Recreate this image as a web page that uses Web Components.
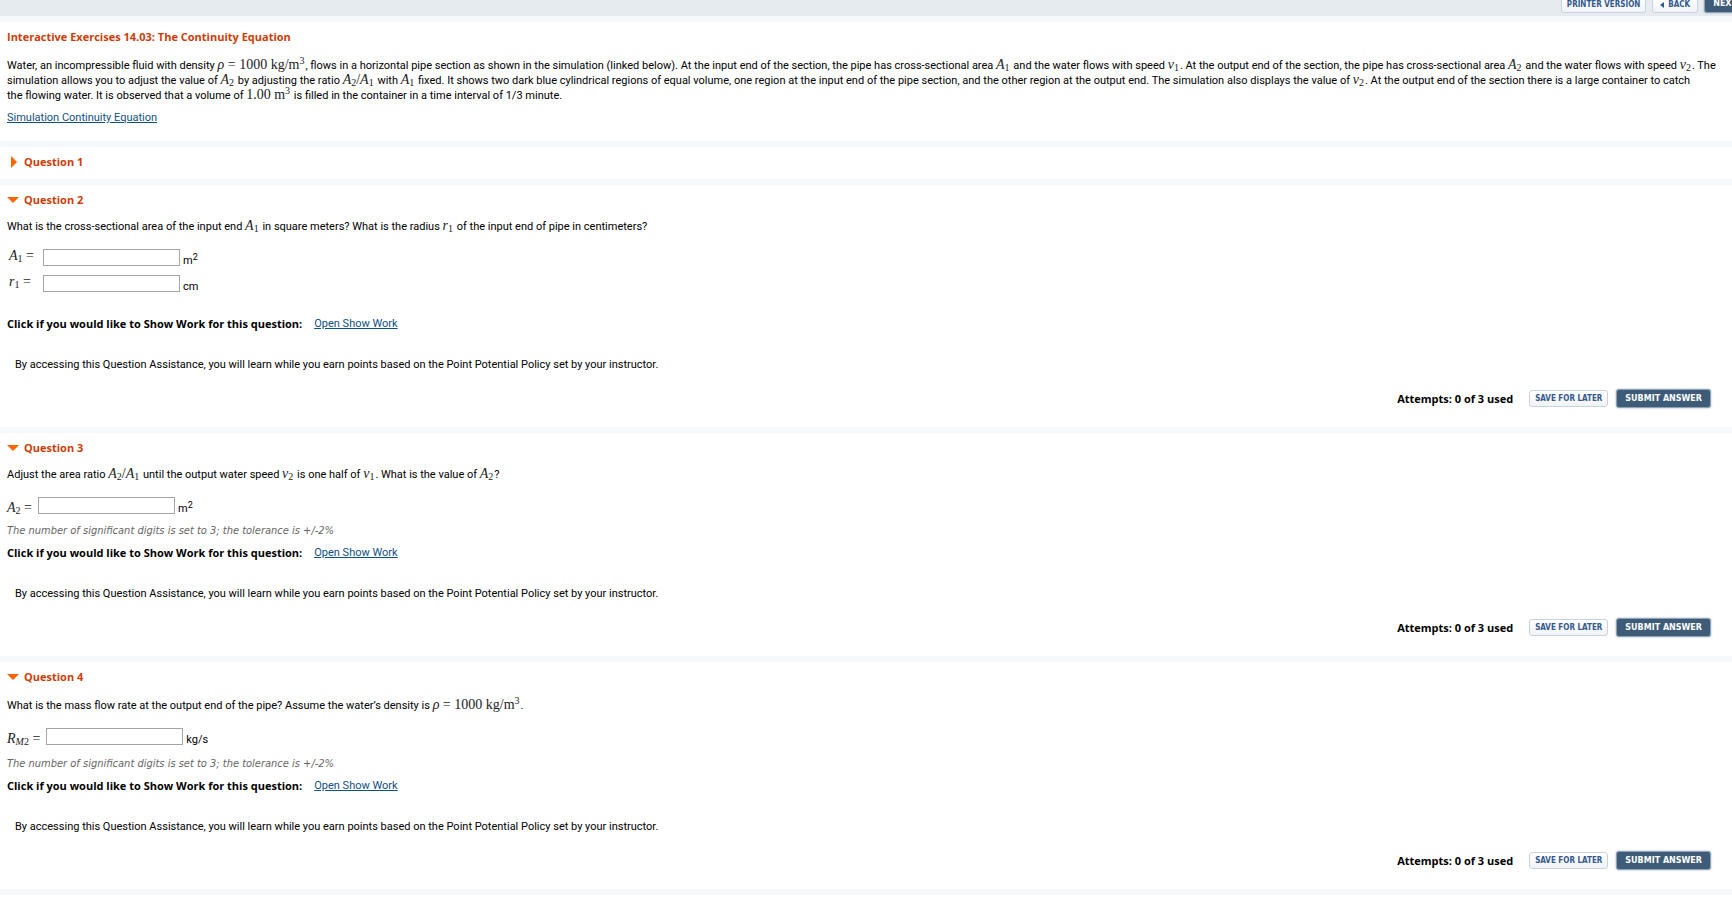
<!DOCTYPE html>
<html lang="en">
<head>
<meta charset="utf-8">
<title>Interactive Exercises 14.03</title>
<style>
body {
    margin: 0;
    background: #fff;
    color: #000;
    font: 11px/15px Roboto, "DejaVu Sans Condensed", sans-serif;
    overflow-x: hidden;
}
p {
    margin: 0;
}
</style>
</head>
<body>
<tool-bar>
    <push-button>PRINTER VERSION</push-button>
    <push-button arrow>BACK</push-button>
    <push-button primary>NEXT</push-button>
</tool-bar>

<exercise-intro>
    <span slot="title">Interactive Exercises 14.03: The Continuity Equation</span>
    <p>Water, an incompressible fluid with density <math-text><i>ρ</i> = 1000 kg/m<sup>3</sup></math-text>, flows in a horizontal pipe section as shown in the simulation (linked below). At the input end of the section, the pipe has cross-sectional area <math-text><i>A</i><sub>1</sub></math-text> and the water flows with speed <math-text><i>v</i><sub>1</sub></math-text>. At the output end of the section, the pipe has cross-sectional area <math-text><i>A</i><sub>2</sub></math-text> and the water flows with speed <math-text><i>v</i><sub>2</sub></math-text>. The<br>
    simulation allows you to adjust the value of <math-text><i>A</i><sub>2</sub></math-text> by adjusting the ratio <math-text><i>A</i><sub>2</sub>/<i>A</i><sub>1</sub></math-text> with <math-text><i>A</i><sub>1</sub></math-text> fixed. It shows two dark blue cylindrical regions of equal volume, one region at the input end of the pipe section, and the other region at the output end. The simulation also displays the value of <math-text><i>v</i><sub>2</sub></math-text>. At the output end of the section there is a large container to catch<br>
    the flowing water. It is observed that a volume of <math-text>1.00 m<sup>3</sup></math-text> is filled in the container in a time interval of 1/3 minute.</p>
</exercise-intro>

<exercise-question number="1"></exercise-question>

<exercise-question number="2" open>
    <p slot="text">What is the cross-sectional area of the input end <math-text><i>A</i><sub>1</sub></math-text> in square meters? What is the radius <math-text><i>r</i><sub>1</sub></math-text> of the input end of pipe in centimeters?</p>
    <answer-field stacked><math-text slot="label"><i>A</i><sub>1</sub> =</math-text>m<math-power>2</math-power></answer-field>
    <answer-field stacked><math-text slot="label"><i>r</i><sub>1</sub> =</math-text>cm</answer-field>
</exercise-question>

<exercise-question number="3" open tolerance="2">
    <p slot="text">Adjust the area ratio <math-text><i>A</i><sub>2</sub>/<i>A</i><sub>1</sub></math-text> until the output water speed <math-text><i>v</i><sub>2</sub></math-text> is one half of <math-text><i>v</i><sub>1</sub></math-text>. What is the value of <math-text><i>A</i><sub>2</sub></math-text>?</p>
    <answer-field><math-text slot="label"><i>A</i><sub>2</sub> =</math-text>m<math-power>2</math-power></answer-field>
</exercise-question>

<exercise-question number="4" open roomy tolerance="2">
    <p slot="text">What is the mass flow rate at the output end of the pipe? Assume the water’s density is <math-text><i>ρ</i> = 1000 kg/m<sup>3</sup></math-text>.</p>
    <answer-field><math-text slot="label"><i>R</i><sub><i>M</i>2</sub> =</math-text>kg/s</answer-field>
</exercise-question>

<script>
class BaseElement extends HTMLElement {
    connectedCallback() {
        if (this.shadowRoot) return
        // inline elements must not pick up spaces around their slot
        this.attachShadow({mode: 'open'}).innerHTML = this.render().trim()
    }
}

class ToolBar extends BaseElement {
    render() {
        return `
            <style>
            :host {
                display: flex;
                justify-content: flex-end;
                align-items: flex-end;
                gap: 6px;
                box-sizing: border-box;
                height: 16px;
                padding-bottom: 3px;
                background: #e6ebef;
                overflow: hidden;
            }
            ::slotted(:last-child) {
                margin-right: -14px;
            }
            </style>
            <slot></slot>
        `
    }
}

class PushButton extends BaseElement {
    render() {
        const arrow = this.hasAttribute('arrow')
            ? '<svg width="4" height="6" viewBox="0 0 4 6"><path d="M4 0v6L0 3z" fill="#2f5a8f"/></svg>'
            : ''
        return `
            <style>
            :host {
                display: block;
                flex: none;
            }
            button {
                display: flex;
                align-items: center;
                gap: 4px;
                height: 17px;
                padding: 0 5px;
                border: 1px solid #c9d3df;
                border-radius: 3px;
                background: linear-gradient(#fff, #f0f3f6);
                color: #34588c;
                font: bold 8px/15px "DejaVu Sans Condensed", "DejaVu Sans", sans-serif;
                white-space: nowrap;
            }
            :host([arrow]) button {
                padding: 0 7px;
            }
            :host([primary]) button {
                height: 19px;
                padding: 0 8px;
                border-color: #8fa3b6;
                background: #3e5c78;
                box-shadow: 0 0 2px #8fa3b6;
                color: #fff;
                font-family: "DejaVu Sans", sans-serif;
            }
            </style>
            <button type="button">${arrow}<slot></slot></button>
        `
    }
}

class MathText extends BaseElement {
    render() {
        return `
            <style>
            :host {
                margin-right: 1px;
                color: #222;
                font: 14px/1px "Liberation Serif", serif;
                white-space: nowrap;
            }
            ::slotted(sub),
            ::slotted(sup) {
                font-size: 10px;
                line-height: 1px;
            }
            ::slotted(sub) {
                vertical-align: -2px;
            }
            ::slotted(sup) {
                vertical-align: 5px;
            }
            </style><slot></slot>
        `
    }
}

class MathPower extends BaseElement {
    render() {
        return `
            <style>
            sup {
                font-size: 9px;
                line-height: 1px;
                vertical-align: 4px;
            }
            </style><sup><slot></slot></sup>
        `
    }
}

class ExerciseIntro extends BaseElement {
    render() {
        return `
            <style>
            :host {
                display: block;
                padding: 7px 0 16px 7px;
                border-top: 6px solid #f5f9fc;
            }
            h1 {
                margin: 0 0 14px;
                color: #cf3c06;
                font: bold 11px/15px "Open Sans", sans-serif;
            }
            a {
                display: inline-block;
                margin-top: 7px;
                color: #0f5082;
            }
            </style>
            <h1><slot name="title"></slot></h1>
            <slot></slot>
            <a href="#simulation">Simulation Continuity Equation</a>
        `
    }
}

class AnswerField extends BaseElement {
    render() {
        return `
            <style>
            :host {
                display: flex;
                align-items: flex-start;
                height: 26px;
            }
            label {
                padding: 4px 5px 0 0;
            }
            :host([stacked]) label {
                box-sizing: border-box;
                width: 36px;
                padding: 0 0 0 2px;
            }
            input {
                box-sizing: border-box;
                width: 137px;
                height: 17px;
                margin: 0;
                padding: 1px 3px;
                border: 1px solid #a5a5a5;
                background: #fff;
                font: inherit;
            }
            span {
                padding: 4px 0 0 3px;
            }
            </style>
            <label for="answer"><slot name="label"></slot></label>
            <input id="answer" type="text">
            <span><slot></slot></span>
        `
    }
}

class ExerciseQuestion extends BaseElement {
    render() {
        const open = this.hasAttribute('open')
        const tolerance = this.getAttribute('tolerance')
        const arrow = open ? 'M0 3h12L6 9z' : 'M4 0l6 6-6 6z'
        return `
            <style>
            :host {
                display: block;
                padding: 7px 7px 10px;
                border-top: 6px solid #f5f9fc;
            }
            :host([open]) {
                padding-bottom: 19px;
            }
            :host(:last-of-type) {
                border-bottom: 6px solid #f5f9fc;
            }
            h2, b {
                font: bold 11px/15px "Open Sans", sans-serif;
            }
            h2 {
                display: flex;
                align-items: center;
                gap: 5px;
                margin: 0;
                color: #cf3c06;
            }
            .text {
                padding: 12px 0 15px;
            }
            :host([roomy]) .text {
                padding-top: 14px;
            }
            :host([roomy]) .fields {
                padding-bottom: 2px;
            }
            .hint {
                padding-bottom: 7px;
                color: #666;
                font-family: "DejaVu Sans Condensed", sans-serif;
                font-style: italic;
            }
            .work {
                display: flex;
                gap: 12px;
            }
            .fields + .work {
                margin-top: 15px;
            }
            a {
                color: #0f5082;
            }
            .policy {
                padding: 26px 8px 17px;
            }
            .actions {
                display: flex;
                justify-content: flex-end;
                align-items: center;
                gap: 8px;
                padding-right: 14px;
            }
            .actions b {
                margin-right: 8px;
            }
            </style>
            <h2>
                <svg width="12" height="12" viewBox="0 0 12 12"><path d="${arrow}" fill="#ff6200"/></svg>
                <span>Question ${this.getAttribute('number')}</span>
            </h2>
            ${open ? `
                <div class="text"><slot name="text"></slot></div>
                <div class="fields"><slot></slot></div>
                ${tolerance ? `<div class="hint">The number of significant digits is set to 3; the tolerance is +/-${tolerance}%</div>` : ''}
                <div class="work">
                    <b>Click if you would like to Show Work for this question:</b>
                    <a href="#work">Open Show Work</a>
                </div>
                <div class="policy">By accessing this Question Assistance, you will learn while you earn points based on the Point Potential Policy set by your instructor.</div>
                <div class="actions">
                    <b>Attempts: 0 of 3 used</b>
                    <push-button>SAVE FOR LATER</push-button>
                    <push-button primary>SUBMIT ANSWER</push-button>
                </div>
            ` : ''}
        `
    }
}

window.customElements.define('tool-bar', ToolBar)
window.customElements.define('push-button', PushButton)
window.customElements.define('math-text', MathText)
window.customElements.define('math-power', MathPower)
window.customElements.define('exercise-intro', ExerciseIntro)
window.customElements.define('answer-field', AnswerField)
window.customElements.define('exercise-question', ExerciseQuestion)
</script>
</body>
</html>
